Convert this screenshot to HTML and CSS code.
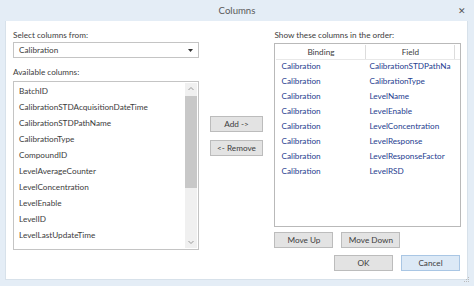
FILE: index.html
```html
<!DOCTYPE html>
<html lang="en">
<head>
    <meta charset="UTF-8">
    <title>Columns</title>
    <link rel="stylesheet" href="styles.css">
</head>
<body>
    <div class="window">
        <div class="title-bar">
            <span class="title">Columns</span>
            <span class="close">&#x2715;</span>
        </div>

        <div class="panel">
            <div class="left-col">
                <div class="label">Select columns from:</div>
                <div class="select">
                    <span>Calibration</span>
                    <svg class="select-arrow" width="7" height="5" viewBox="0 0 7 5"><path d="M1 1 L6 1 L3.5 4 Z" fill="#333"/></svg>
                </div>
                <div class="label label-gap">Available columns:</div>
                <div class="listbox">
                    <ul class="items">
                        <li>BatchID</li>
                        <li>CalibrationSTDAcquisitionDateTime</li>
                        <li>CalibrationSTDPathName</li>
                        <li>CalibrationType</li>
                        <li>CompoundID</li>
                        <li>LevelAverageCounter</li>
                        <li>LevelConcentration</li>
                        <li>LevelEnable</li>
                        <li>LevelID</li>
                        <li>LevelLastUpdateTime</li>
                    </ul>
                    <div class="scrollbar">
                        <svg class="arrow" width="12" height="12" viewBox="0 0 12 12"><path d="M3.5 7 L6 4.5 L8.5 7" fill="none" stroke="#999" stroke-width="1"/></svg>
                        <div class="track"><div class="thumb"></div></div>
                        <svg class="arrow" width="12" height="12" viewBox="0 0 12 12"><path d="M3.5 5 L6 7.5 L8.5 5" fill="none" stroke="#999" stroke-width="1"/></svg>
                    </div>
                </div>
            </div>

            <div class="mid-col">
                <button class="btn">Add -&gt;</button>
                <button class="btn">&lt;- Remove</button>
            </div>

            <div class="right-col">
                <div class="label">Show these columns in the order:</div>
                <div class="grid">
                    <div class="grid-head">
                        <div class="cell-a">Binding</div>
                        <div class="cell-b">Field</div>
                    </div>
                    <div class="grid-row"><div class="cell-a">Calibration</div><div class="cell-b">CalibrationSTDPathNa</div></div>
                    <div class="grid-row"><div class="cell-a">Calibration</div><div class="cell-b">CalibrationType</div></div>
                    <div class="grid-row"><div class="cell-a">Calibration</div><div class="cell-b">LevelName</div></div>
                    <div class="grid-row"><div class="cell-a">Calibration</div><div class="cell-b">LevelEnable</div></div>
                    <div class="grid-row"><div class="cell-a">Calibration</div><div class="cell-b">LevelConcentration</div></div>
                    <div class="grid-row"><div class="cell-a">Calibration</div><div class="cell-b">LevelResponse</div></div>
                    <div class="grid-row"><div class="cell-a">Calibration</div><div class="cell-b">LevelResponseFactor</div></div>
                    <div class="grid-row"><div class="cell-a">Calibration</div><div class="cell-b">LevelRSD</div></div>
                </div>
                <div class="move-row">
                    <button class="btn btn-move">Move Up</button>
                    <button class="btn btn-move">Move Down</button>
                </div>
                <div class="dialog-row">
                    <button class="btn btn-dialog">OK</button>
                    <button class="btn btn-dialog btn-default">Cancel</button>
                </div>
            </div>
        </div>
        <svg class="grip" width="6" height="6" viewBox="0 0 6 6">
            <rect x="4" y="0" width="1" height="1" fill="#bbb"/>
            <rect x="2" y="2" width="1" height="1" fill="#bbb"/>
            <rect x="4" y="2" width="1" height="1" fill="#bbb"/>
            <rect x="0" y="4" width="1" height="1" fill="#bbb"/>
            <rect x="2" y="4" width="1" height="1" fill="#bbb"/>
            <rect x="4" y="4" width="1" height="1" fill="#bbb"/>
        </svg>
    </div>
</body>
</html>
```

FILE: styles.css
```css
* {
    margin: 0;
    padding: 0;
    box-sizing: border-box;
}

body {
    font-family: Lato, 'Open Sans', sans-serif;
    font-size: 8.2px;
    color: #3c3c3c;
    background-color: #e4edf6;
}

.window {
    position: relative;
    width: 474px;
    height: 286px;
    display: flex;
    flex-direction: column;
    background-color: #e4edf6;
}

.title-bar {
    height: 21px;
    display: flex;
    align-items: center;
    justify-content: center;
    position: relative;
}

.title {
    font-size: 9.6px;
    color: #5a5a5a;
}

.close {
    position: absolute;
    right: 8px;
    top: 5px;
    font-size: 9px;
    color: #555;
}

.panel {
    margin: 0 6px 0 5px;
    height: 259px;
    background-color: #fff;
    border: 1px solid #d7e1ea;
    border-top: none;
    display: flex;
    align-items: flex-start;
    padding: 8px 6px 0 7px;
}

.left-col {
    width: 186px;
    display: flex;
    flex-direction: column;
}

.label {
    height: 12px;
    line-height: 12px;
}

.label-gap {
    margin-top: 8px;
}

.select {
    margin-top: 1px;
    height: 16px;
    border: 1px solid #c4c4c4;
    display: flex;
    align-items: center;
    justify-content: space-between;
    padding: 0 4px 0 5px;
}

.listbox {
    margin-top: 3px;
    height: 169px;
    border: 1px solid #c4c4c4;
    display: flex;
}

.items {
    list-style: none;
    flex: 1;
    padding: 1px 0 0 5px;
}

.items li {
    height: 16px;
    line-height: 16px;
    white-space: nowrap;
}

.scrollbar {
    width: 12px;
    margin: 1px 1px 1px 0;
    background-color: #f0f0f0;
    display: flex;
    flex-direction: column;
}

.track {
    flex: 1;
}

.thumb {
    height: 92px;
    margin-top: 1px;
    background-color: #c8c8c8;
}

.mid-col {
    width: 54px;
    margin: 87px 11px 0 11px;
    display: flex;
    flex-direction: column;
    gap: 8px;
}

.btn {
    font-family: inherit;
    font-size: 8.2px;
    color: #3c3c3c;
    height: 16px;
    background-color: #e3e3e3;
    border: 1px solid #bcbcbc;
}

.right-col {
    width: 187px;
    display: flex;
    flex-direction: column;
}

.grid {
    margin-top: 2px;
    height: 184px;
    border: 1px solid #b9b9b9;
    display: flex;
    flex-direction: column;
}

.grid-head {
    display: flex;
    height: 15px;
    line-height: 14px;
    margin: 1px 0 0 1px;
    border-bottom: 1px solid #e8e8e8;
}

.grid-head .cell-a,
.grid-head .cell-b {
    text-align: center;
    border-right: 1px solid #dcdcdc;
}

.cell-a {
    width: 90px;
}

.cell-b {
    width: 89px;
}

.grid-row {
    display: flex;
    height: 15px;
    line-height: 15px;
    color: #25408f;
    white-space: nowrap;
}

.grid-row .cell-a {
    padding-left: 6px;
}

.grid-row .cell-b {
    padding-left: 4px;
}

.grid-head + .grid-row {
    margin-top: -1px;
}

.move-row {
    display: flex;
    gap: 8px;
    margin-top: 5px;
}

.btn-move {
    width: 59px;
}

.dialog-row {
    display: flex;
    justify-content: flex-end;
    gap: 8px;
    margin-top: 7px;
    padding-right: 1px;
}

.btn-dialog {
    width: 59px;
}

.btn-default {
    background-color: #dce9f6;
    border-color: #a9c6e4;
}

.grip {
    position: absolute;
    right: 4px;
    bottom: 3px;
}
```
